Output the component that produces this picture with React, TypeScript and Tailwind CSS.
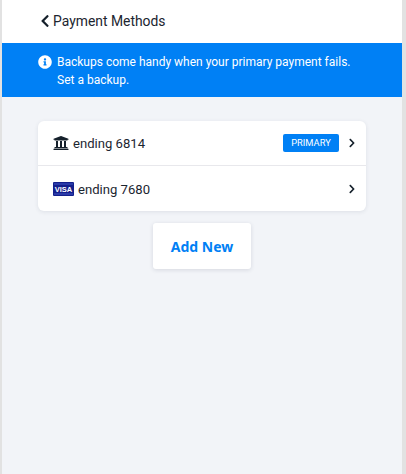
import { FaChevronLeft, FaChevronRight, FaInfoCircle, FaUniversity } from 'react-icons/fa'

function Visa() {
  return (
    <svg width="21" height="14" viewBox="0 0 21 14" className="shrink-0">
      <rect width="21" height="14" rx="1" fill="#14208c" />
      <rect x="1" y="1" width="19" height="2" fill="#2a3aa8" />
      <rect x="1" y="11" width="19" height="2" fill="#2a3aa8" />
      <text x="10.5" y="10" textAnchor="middle" fontSize="7.5" fontWeight="700" fill="#fff" fontFamily="Liberation Sans, sans-serif">
        VISA
      </text>
    </svg>
  )
}

export default function App() {
  return (
    <div className="flex h-[474px] w-[406px] overflow-hidden bg-[#f2f4f8] font-['Roboto',sans-serif] text-[#1c2530]">
      <div className="w-[2px] shrink-0 bg-[#e2e2e2]" />
      <div className="flex min-w-0 flex-1 flex-col">
        <div className="flex h-[43px] items-center bg-white pb-[1px] pl-[36px]">
          <FaChevronLeft size={14} className="shrink-0 text-[#15202b]" />
          <span className="ml-[1px] text-[13.9px]">Payment Methods</span>
        </div>
        <div className="flex h-[54px] bg-[#0080f5] pl-[36px] pt-[10px] text-[12px] leading-[18px] text-white">
          <FaInfoCircle size={14} className="mt-[2px] shrink-0 text-white" />
          <p className="ml-[5px]">
            Backups come handy when your primary payment fails.
            <br />
            Set a backup.
          </p>
        </div>
        <div className="ml-[36px] mt-[24px] w-[328px] rounded-md bg-white shadow-[0_1px_4px_rgba(40,50,80,0.1)]">
          <div className="flex h-[45px] items-center border-b border-[#e8e8ec] pl-[15px] pr-[9px]">
            <FaUniversity size={16} className="shrink-0 text-[#15202b]" />
            <span className="ml-[4px] pt-[2px] text-[13.1px]">ending 6814</span>
            <span className="ml-auto flex h-[18px] w-[56px] items-center justify-center rounded-[2px] bg-[#0080f5] text-[9.3px] text-white">
              PRIMARY
            </span>
            <FaChevronRight size={10} className="ml-[8px] shrink-0 text-[#15202b]" />
          </div>
          <div className="flex h-[45px] items-center pl-[15px] pr-[9px]">
            <Visa />
            <span className="ml-[4px] pt-[2px] text-[13.1px]">ending 7680</span>
            <FaChevronRight size={10} className="ml-auto shrink-0 text-[#15202b]" />
          </div>
        </div>
        <div className="ml-[151px] mt-[12px] flex h-[46px] w-[98px] items-center justify-center rounded-[3px] bg-white font-['Noto_Sans',sans-serif] text-[14px] font-bold text-[#0080f5] shadow-[0_1px_4px_rgba(40,50,80,0.14)]">
          Add New
        </div>
      </div>
      <div className="w-[4px] shrink-0 bg-[#e2e2e2]" />
    </div>
  )
}
